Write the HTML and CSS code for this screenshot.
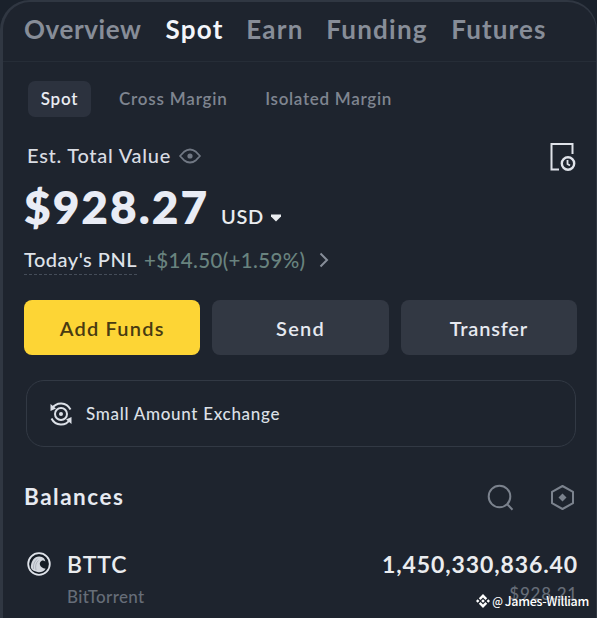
FILE: index.html
```html
<!DOCTYPE html>
<html lang="en">
<head>
    <meta charset="UTF-8">
    <meta name="viewport" content="width=device-width, initial-scale=1.0">
    <title>Spot Wallet</title>
    <link rel="stylesheet" href="styles.css">
</head>
<body>
    <div class="wallet">
        <nav class="main-tabs">
            <a class="tab-overview">Overview</a>
            <a class="tab-spot active">Spot</a>
            <a class="tab-earn">Earn</a>
            <a class="tab-funding">Funding</a>
            <a class="tab-futures">Futures</a>
        </nav>

        <nav class="sub-tabs">
            <a class="active">Spot</a>
            <a class="cross">Cross Margin</a>
            <a class="isolated">Isolated Margin</a>
        </nav>

        <section class="summary">
            <div class="total-label">
                <span>Est. Total Value</span>
                <svg class="eye-icon" width="22" height="16" viewBox="0 0 22 16" fill="none" stroke="currentColor" stroke-width="1.8" stroke-linejoin="round">
                    <path d="M1 8L5 3.8Q11-.8 17 3.8L21 8L17 12.2Q11 16.8 5 12.2Z"/>
                    <circle cx="11" cy="8" r="2.6" fill="currentColor" stroke="none"/>
                </svg>
                <svg class="history-icon" width="27" height="29" viewBox="0 0 27 29" fill="none" stroke="currentColor" stroke-width="2">
                    <path d="M10 26.500H2.500V1H23.500V11"/>
                    <circle cx="19" cy="20.500" r="6.200" stroke-width="2.400"/>
                    <path d="M18.500 17V21L21 22.500" stroke-width="1.800"/>
                </svg>
            </div>
            <div class="total">
                <span class="amount">$928.27</span>
                <span class="currency">USD</span>
                <svg class="caret" width="12" height="10" viewBox="0 0 12 10" fill="currentColor"><path d="M1 .5H11V2.500L6 7.500L1 2.500Z"/></svg>
            </div>
            <div class="pnl">
                <span class="pnl-label">Today's PNL</span>
                <span class="pnl-value">+$14.50(+1.59%)</span>
                <svg class="chevron" width="10" height="16" viewBox="0 0 10 16" fill="none" stroke="currentColor" stroke-width="2"><path d="M1.500 1.500L8 8L1.500 14.500"/></svg>
            </div>
        </section>

        <div class="actions">
            <button class="primary">Add Funds</button>
            <button class="send">Send</button>
            <button class="transfer">Transfer</button>
        </div>

        <div class="exchange">
            <svg width="24" height="24" viewBox="0 0 24 24" fill="none" stroke="currentColor" stroke-width="2">
                <path d="M3 6.500C7.500-.6 17.500-.2 21.500 7.500M21 17.500C16.500 24.600 6.500 24.200 2.500 16.500"/>
                <path d="M1.500 2V9L7 6.500ZM22.500 22V15L17 17.500Z" fill="currentColor" stroke="none"/>
                <circle cx="12" cy="12" r="6"/>
                <circle cx="12" cy="12" r="2" fill="currentColor" stroke="none"/>
            </svg>
            <span>Small Amount Exchange</span>
        </div>

        <div class="balances-header">
            <h2>Balances</h2>
            <svg width="27" height="27" viewBox="0 0 27 27" fill="none" stroke="currentColor" stroke-width="2">
                <circle cx="12.500" cy="12.500" r="10.800"/>
                <path d="M20 20L25.500 25.800"/>
            </svg>
            <svg width="25" height="27" viewBox="0 0 25 27" fill="none" stroke="currentColor" stroke-width="2" stroke-linejoin="round">
                <path d="M12.500 2L23 7.800V19.200L12.500 25L2 19.200V7.800Z"/>
                <path d="M12.500 9.500L16.500 13.500L12.500 17.500L8.500 13.500Z" fill="currentColor" stroke="none"/>
            </svg>
        </div>

        <div class="coin">
            <svg class="coin-icon" width="24" height="24" viewBox="0 0 24 24">
                <circle cx="12" cy="12" r="10.800" fill="#151c25" stroke="#dfe3ea" stroke-width="1.800"/>
                <path d="M3.800 15.500C4 9 7.500 4.300 12.500 4.600C16 4.800 18.200 7 18.300 9.600C17.200 8.400 15.500 8.200 14.400 8.900C11.700 10.500 12 15.500 18.700 16.700C16.500 20 13 20.600 10.500 20C7 19.300 4.700 18 3.800 15.500Z" fill="#d3d7de"/>
                <path d="M6.500 17C6 12.500 7.500 9 10.500 6.800M9 18C8 14 9 10.500 11.500 8.500" fill="none" stroke="#949ba6" stroke-width=".6"/>
            </svg>
            <div class="coin-name">
                <div class="symbol">BTTC</div>
                <div class="full-name">BitTorrent</div>
            </div>
            <div class="coin-balance">
                <div class="quantity">1,450,330,836.40</div>
                <div class="fiat">$928.21</div>
            </div>
        </div>

        <div class="watermark">
            <svg width="14" height="14" viewBox="0 0 14 14" fill="currentColor">
                <path d="M7 0L11.200 4.200L9.500 5.900L7 3.400L4.500 5.900L2.800 4.200ZM7 14L2.800 9.800L4.500 8.100L7 10.600L9.500 8.100L11.200 9.800ZM1.700 5.300L3.400 7L1.700 8.700L0 7ZM12.300 5.300L14 7L12.300 8.700L10.600 7ZM7 5.200L8.800 7L7 8.800L5.200 7Z"/>
            </svg>
            <span class="at">@</span><span>James-William</span>
        </div>
    </div>
</body>
</html>
```
FILE: styles.css
```css
* {
    box-sizing: border-box;
}
body {
    margin: 0;
    background-color: #1a212b;
    font-family: Lato, "Liberation Sans", sans-serif;
    color: #eaecef;
}
svg {
    display: block;
    flex-shrink: 0;
}
.wallet {
    position: relative;
    height: 618px;
    overflow: hidden;
    background-color: #1e242e;
    border: 2px solid #303742;
    border-left-width: 3px;
    border-right-width: 1px;
    border-bottom: none;
    border-radius: 30px 30px 0 0;
}
.main-tabs {
    display: flex;
    gap: 22.5px;
    height: 60px;
    padding-left: 21px;
    border-bottom: 1px solid #262d37;
    font-size: 26px;
    font-weight: 700;
    line-height: 54px;
    letter-spacing: 1.25px;
    color: #878d98;
}
.main-tabs .active {
    color: #f3f5fa;
}
.main-tabs .tab-overview {
    margin-right: 1.5px;
    letter-spacing: 0.6px;
}
.main-tabs .tab-futures {
    margin-left: 1px;
    letter-spacing: 1.1px;
}
.sub-tabs {
    display: flex;
    align-items: center;
    height: 36px;
    margin: 19px 0 0 25px;
    font-size: 17px;
    font-weight: 600;
    line-height: 36px;
    letter-spacing: 0.8px;
    color: #7f8590;
}
.sub-tabs .active {
    width: 63px;
    border-radius: 7px;
    background-color: #2c323e;
    text-align: center;
    color: #eaecf2;
}
.sub-tabs .cross {
    margin-left: 28px;
}
.sub-tabs .isolated {
    margin-left: 37.5px;
    letter-spacing: 0.7px;
}
.summary {
    padding: 24px 20px 0 21px;
}
.total-label {
    display: flex;
    align-items: center;
    height: 32px;
    padding-left: 3px;
    font-size: 20px;
    font-weight: 500;
    line-height: 28px;
    letter-spacing: 0.75px;
    color: #d9dce3;
}
.total-label span {
    padding-bottom: 5px;
}
.eye-icon {
    margin: 0 0 3px 8px;
    color: #717884;
}
.history-icon {
    margin-left: auto;
    color: #dfe2e9;
}
.total {
    display: flex;
    align-items: baseline;
    height: 68px;
    line-height: 68px;
}
.amount {
    font-size: 46px;
    font-weight: 800;
    letter-spacing: 2px;
    color: #e9ecf5;
}
.currency {
    margin-left: 12px;
    font-size: 20px;
    font-weight: 600;
    letter-spacing: 0.6px;
}
.caret {
    margin: 0 0 2px 6px;
}
.pnl {
    display: flex;
    align-items: center;
    height: 36px;
    padding-top: 1px;
    font-size: 20px;
    font-weight: 500;
    line-height: 30px;
    letter-spacing: 0.5px;
}
.pnl-label {
    border-bottom: 1px dashed #454d59;
    color: #dfe2e9;
}
.pnl-value {
    margin-left: 7px;
    font-size: 20.5px;
    letter-spacing: 0.35px;
    color: #69837f;
}
.chevron {
    margin-left: 14px;
    color: #878e99;
}
.actions {
    display: grid;
    grid-template-columns: repeat(3, 1fr);
    gap: 12px;
    padding: 23px 19px 0 21px;
}
.actions button {
    height: 55px;
    padding: 0;
    border: none;
    border-radius: 8px;
    background-color: #323843;
    font-family: inherit;
    font-size: 20px;
    font-weight: 600;
    letter-spacing: 1.2px;
    color: #e6e9f0;
}
.actions .primary {
    background-color: #fdd535;
    color: #493b11;
}
.actions .transfer {
    letter-spacing: 0.8px;
}
.exchange {
    display: flex;
    align-items: center;
    gap: 13px;
    height: 67px;
    margin: 25px 20px 0 23px;
    padding-left: 22px;
    border: 1px solid #323944;
    border-radius: 18px;
    font-size: 17px;
    font-weight: 500;
    letter-spacing: 0.7px;
    color: #dce0e7;
}
.balances-header {
    display: flex;
    align-items: center;
    height: 40px;
    margin-top: 30px;
    padding: 0 21px;
    color: #7b828d;
}
.balances-header h2 {
    margin: 0 auto 0 0;
    padding-bottom: 2px;
    font-size: 22.5px;
    font-weight: 700;
    letter-spacing: 1.5px;
    color: #e7eaf1;
}
.balances-header svg + svg {
    margin-left: 36px;
}
.coin {
    display: flex;
    padding: 32px 18px 0 24px;
}
.coin-icon {
    margin-top: 3px;
}
.coin-name {
    margin-left: 16px;
}
.coin-balance {
    margin-left: auto;
    text-align: right;
}
.symbol,
.quantity {
    font-size: 23px;
    font-weight: 700;
    line-height: 31px;
    letter-spacing: 0.9px;
}
.symbol {
    font-weight: 600;
}
.full-name,
.fiat {
    font-size: 17px;
    font-weight: 500;
    line-height: 34px;
    letter-spacing: 0.35px;
    color: #666d78;
}
.fiat {
    margin-top: -3px;
    letter-spacing: 0.8px;
}
.watermark {
    position: absolute;
    right: 7px;
    bottom: 7px;
    display: flex;
    align-items: center;
    font-family: "Noto Sans CJK SC", sans-serif;
    font-size: 12.5px;
    font-weight: 500;
    line-height: 20px;
    letter-spacing: -0.3px;
    color: #fff;
}
.at {
    margin: 0 2px;
    font-size: 11px;
}
```
